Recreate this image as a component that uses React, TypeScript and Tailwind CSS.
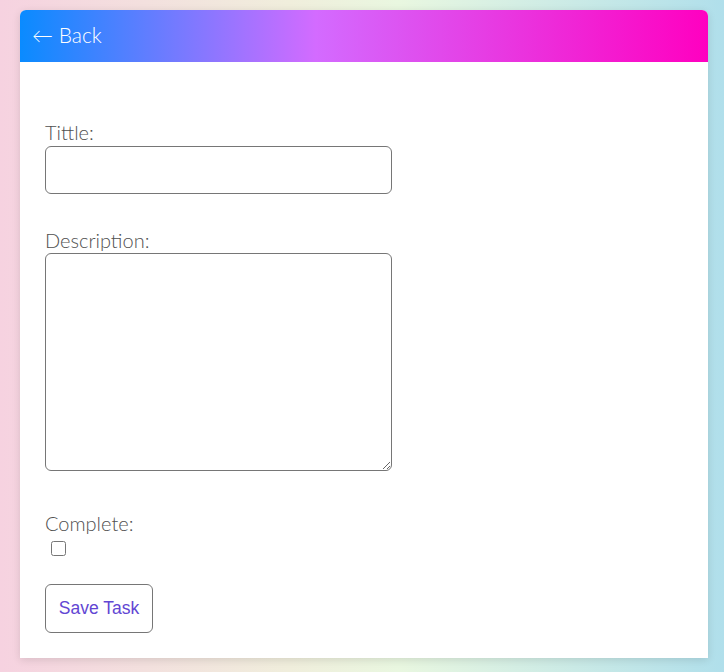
export default function App() {
  return (
    <div
      className="min-h-[672px] w-full bg-[linear-gradient(90deg,#f6d2e0_0%,#f0eedc_40%,#e9f7e0_55%,#b0dfeb_100%)] pl-5 pr-4 pt-[10px] pb-[14px]"
      style={{ fontFamily: 'Lato, "Noto Sans", sans-serif' }}
    >
      <div className="rounded-t-md bg-white shadow-[0_2px_8px_rgba(0,0,0,0.12)]">
        <div className="flex h-[52px] items-center rounded-t-md bg-[linear-gradient(90deg,#0a8bff_0%,#d36bff_43%,#ff00c0_100%)] px-3 pb-[2px]">
          <a className="text-[21px] font-light text-white">← Back</a>
        </div>
        <form className="flex flex-col px-[25px] pt-[58px] pb-[25px]" onSubmit={e => e.preventDefault()}>
          <label className="text-[20px] font-light leading-6 text-[#505050]">Tittle:</label>
          <input
            type="text"
            className="mt-[2px] h-[48px] w-[347px] rounded-md border border-[#767676] px-2"
          />
          <label className="mt-[34px] text-[20px] font-light leading-6 text-[#505050]">Description:</label>
          <textarea className="mt-[1px] h-[218px] w-[347px] rounded-md border border-[#767676] px-2" />
          <label className="mt-[40px] text-[20px] font-light leading-6 text-[#505050]">Complete:</label>
          <input type="checkbox" className="ml-[6px] mt-[6px] h-[15px] w-[15px] self-start" />
          <button
            type="submit"
            className="mt-[28px] h-[49px] w-[108px] rounded-md border border-[#767676] text-[17.5px] text-[#6246d3]"
            style={{ fontFamily: '"Liberation Sans", Arial, sans-serif' }}
          >
            Save Task
          </button>
        </form>
      </div>
    </div>
  );
}
